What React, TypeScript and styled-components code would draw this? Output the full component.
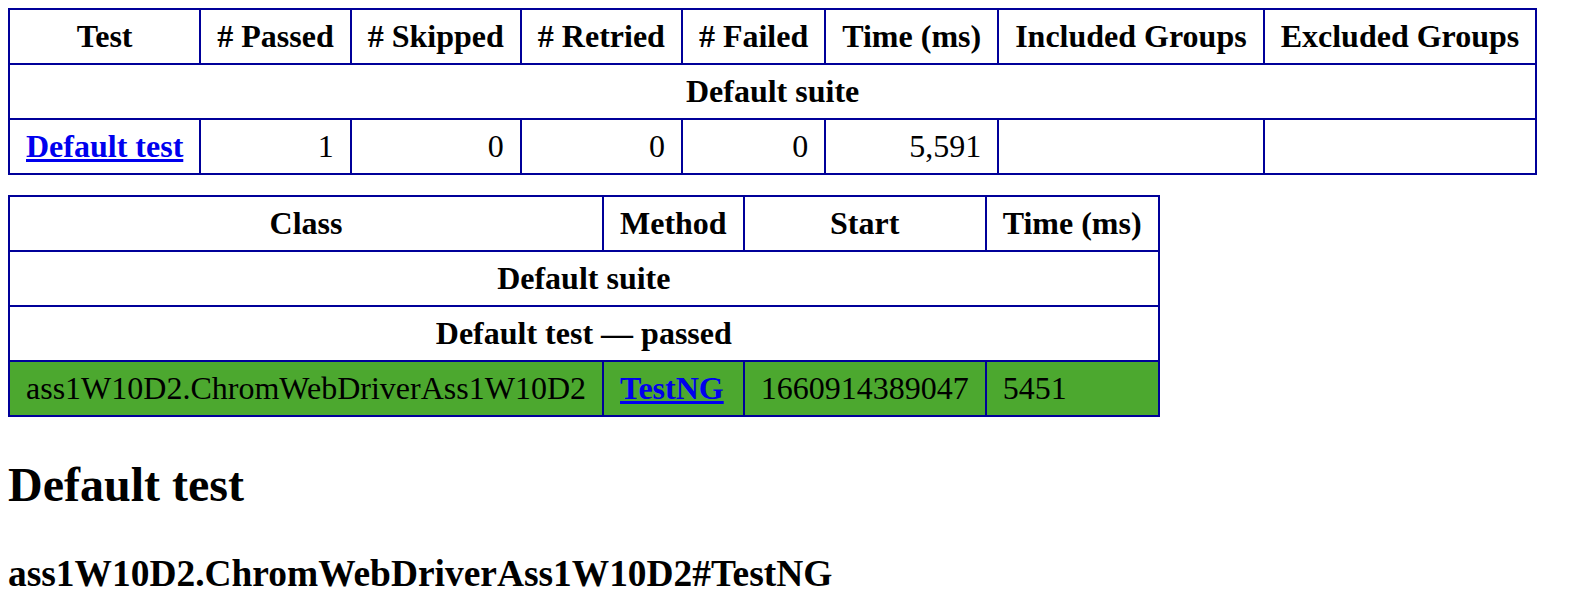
import React from "react";
import styled, { createGlobalStyle } from "styled-components";

const Global = createGlobalStyle`
  html, body { background: #fff; }
  body {
    margin: 8px;
    font-family: "Liberation Serif", "Times New Roman", serif;
    font-size: 32px;
    color: #000;
  }
`;

const Table = styled.table`
  border-collapse: collapse;
  empty-cells: show;
  margin-bottom: 20px;
`;

const Th = styled.th`
  border: 2px solid #009;
  padding: 0.25em 0.5em;
  vertical-align: bottom;
  font-weight: bold;
  text-align: center;
`;

const Td = styled.td<{ $num?: boolean; $pass?: boolean }>`
  border: 2px solid #009;
  padding: 0.25em 0.5em;
  vertical-align: top;
  text-align: ${(p) => (p.$num ? "right" : "left")};
  background-color: ${(p) => (p.$pass ? "#4ca82f" : "transparent")};
`;

const Link = styled.a`
  color: #00e;
  font-weight: bold;
  text-decoration: underline;
`;

const H2 = styled.h2`
  font-size: 1.5em;
  margin: 0.83em 0;
  font-weight: bold;
`;

const H3 = styled.h3`
  font-size: 1.17em;
  margin: 1em 0;
  font-weight: bold;
`;

const summaryHeads = [
  "Test",
  "# Passed",
  "# Skipped",
  "# Retried",
  "# Failed",
  "Time (ms)",
  "Included Groups",
  "Excluded Groups",
];

export default function App() {
  return (
    <>
      <Global />
      <Table>
        <thead>
          <tr>
            {summaryHeads.map((h) => (
              <Th key={h}>{h}</Th>
            ))}
          </tr>
        </thead>
        <tbody>
          <tr>
            <Th colSpan={8}>Default suite</Th>
          </tr>
          <tr>
            <Td>
              <Link href="#t0">Default test</Link>
            </Td>
            <Td $num>1</Td>
            <Td $num>0</Td>
            <Td $num>0</Td>
            <Td $num>0</Td>
            <Td $num>5,591</Td>
            <Td></Td>
            <Td></Td>
          </tr>
        </tbody>
      </Table>
      <Table>
        <thead>
          <tr>
            <Th>Class</Th>
            <Th>Method</Th>
            <Th>Start</Th>
            <Th>Time (ms)</Th>
          </tr>
        </thead>
        <tbody>
          <tr>
            <Th colSpan={4}>Default suite</Th>
          </tr>
          <tr>
            <Th colSpan={4}>Default test — passed</Th>
          </tr>
          <tr>
            <Td $pass>ass1W10D2.ChromWebDriverAss1W10D2</Td>
            <Td $pass>
              <Link href="#m0">TestNG</Link>
            </Td>
            <Td $pass>1660914389047</Td>
            <Td $pass>5451</Td>
          </tr>
        </tbody>
      </Table>
      <H2 id="t0">Default test</H2>
      <H3 id="m0">ass1W10D2.ChromWebDriverAss1W10D2#TestNG</H3>
    </>
  );
}
